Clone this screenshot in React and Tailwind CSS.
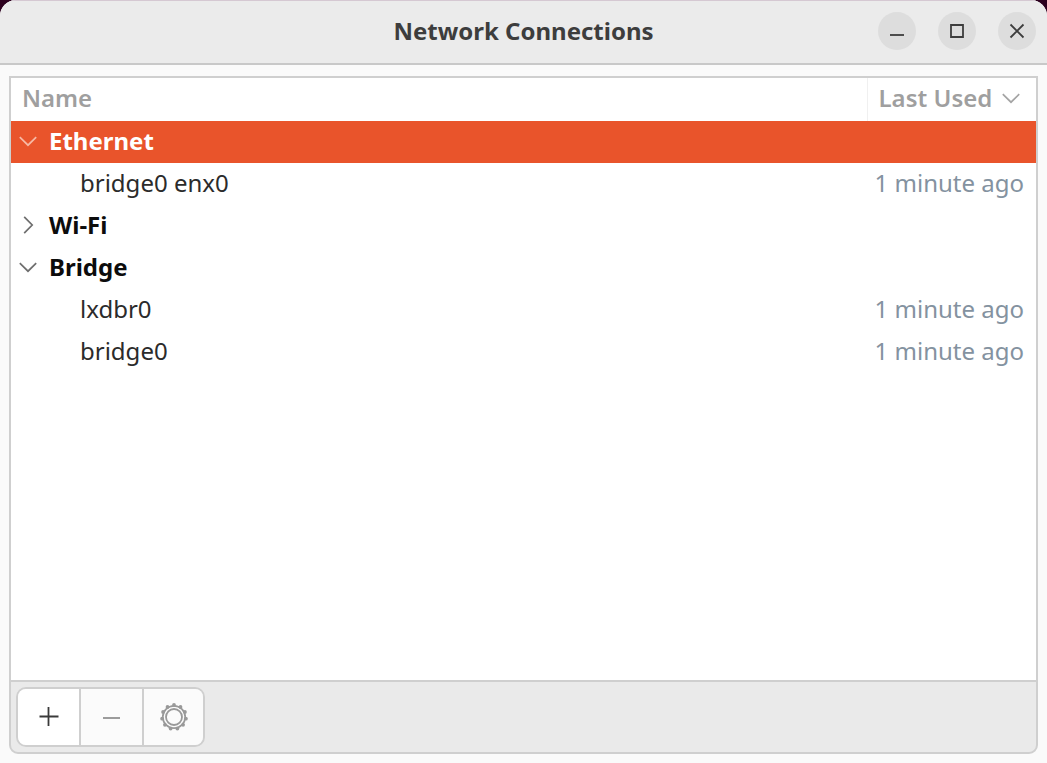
import { useState } from "react";

const GROUPS = [
  { name: "Ethernet", open: true, items: [{ name: "bridge0 enx0", used: "1 minute ago" }] },
  { name: "Wi-Fi", open: false, items: [] },
  {
    name: "Bridge",
    open: true,
    items: [
      { name: "lxdbr0", used: "1 minute ago" },
      { name: "bridge0", used: "1 minute ago" },
    ],
  },
];

function Chevron({ className }) {
  return (
    <svg viewBox="0 0 18 18" className={`size-[18px] shrink-0 ${className}`} fill="none" stroke="currentColor" strokeWidth="1.7" aria-hidden="true">
      <path d="M0.8 5.2 9 13.2 17.2 5.2" />
    </svg>
  );
}

function WindowButton({ label, children }) {
  return (
    <button type="button" aria-label={label} className="flex size-[38px] items-center justify-center rounded-full bg-[#dddddd] text-[#3d3d3d]">
      <svg viewBox="0 0 18 18" className="size-[18px]" fill="none" stroke="currentColor" strokeWidth="1.8" aria-hidden="true">
        {children}
      </svg>
    </button>
  );
}

function Gear() {
  const teeth = Array.from({ length: 11 }, (_, i) => {
    const a = (i * 2 * Math.PI) / 11 - Math.PI / 2;
    return [15 + 12 * Math.cos(a), 15 + 12 * Math.sin(a)];
  });
  return (
    <svg viewBox="0 0 30 30" className="size-[30px]" fill="none" stroke="currentColor" aria-hidden="true">
      {teeth.map(([x, y], i) => (
        <circle key={i} cx={x} cy={y} r="1.9" fill="currentColor" stroke="none" />
      ))}
      <circle cx="15" cy="15" r="11.2" strokeWidth="1.7" />
      <circle cx="15" cy="15" r="8" strokeWidth="1.8" />
    </svg>
  );
}

function Group({ group, selected, onToggle }) {
  return (
    <>
      <tr className={selected ? "h-[42px] bg-[#e9542b] text-white" : "h-[42px] text-[#0c0c0c]"}>
        <td colSpan={2} className="p-0">
          <button type="button" aria-expanded={group.open} onClick={onToggle} className="flex h-[42px] w-full items-center gap-3 pb-[2px] pl-2 text-left font-bold">
            <Chevron className={`${group.open ? "" : "-rotate-90"} ${selected ? "text-[#f6b9a5]" : "text-[#6e6e6e]"}`} />
            {group.name}
          </button>
        </td>
      </tr>
      {group.open &&
        group.items.map((item) => (
          <tr key={item.name} className="h-[42px]">
            <td className="p-0 pb-[2px] pl-[69px] text-[#2b2b2b]">{item.name}</td>
            <td className="p-0 pr-3 pb-[2px] text-right whitespace-nowrap text-[#8492a0]">{item.used}</td>
          </tr>
        ))}
    </>
  );
}

export default function App() {
  const [groups, setGroups] = useState(GROUPS);
  const toggle = (name) => setGroups(groups.map((g) => (g.name === name ? { ...g, open: !g.open } : g)));

  return (
    <div className="min-h-screen bg-[#2c001e] font-['Noto_Sans',sans-serif] text-[24px] leading-8">
      <div className="flex min-h-screen flex-col overflow-hidden rounded-t-[16px] bg-[#fafafa]">
        <header className="grid h-[65px] shrink-0 grid-cols-[1fr_auto_1fr] items-center border-t border-b-2 border-t-[#d5c8d2] border-b-[#c8c8c8] bg-[#ebebeb] pb-[2px]">
          <h1 className="col-start-2 font-bold text-[#3d3d3d]">Network Connections</h1>
          <div className="flex justify-end gap-[22px] pr-[11px]">
            <WindowButton label="Minimize">
              <path d="M2 13H16" />
            </WindowButton>
            <WindowButton label="Maximize">
              <path d="M3 3H15V15H3Z" />
            </WindowButton>
            <WindowButton label="Close">
              <path d="M2.5 2.5 15.5 15.5M15.5 2.5 2.5 15.5" />
            </WindowButton>
          </div>
        </header>

        <main className="flex flex-1 flex-col px-[9px] pt-[11px] pb-[9px]">
          <section className="flex flex-1 flex-col rounded-b-[9px] border-2 border-[#cfcfcf] bg-[#eaeaea]">
            <div className="flex-1 bg-white">
              <table className="w-full border-collapse">
                <thead>
                  <tr className="h-[43px] text-[#9f9f9f]">
                    <th scope="col" className="p-0 pb-1 pl-[11px] text-left font-semibold">Name</th>
                    <th scope="col" className="w-[169px] border-l border-[#f0f0f0] p-0 pb-1">
                      <button type="button" className="flex w-full items-center justify-between pr-4 pl-[11px] font-semibold whitespace-nowrap">
                        Last Used
                        <Chevron className="text-[#a4a4a4]" />
                      </button>
                    </th>
                  </tr>
                </thead>
                <tbody>
                  {groups.map((g) => (
                    <Group key={g.name} group={g} selected={g.name === "Ethernet"} onToggle={() => toggle(g.name)} />
                  ))}
                </tbody>
              </table>
            </div>
            <div className="flex border-t-2 border-[#cfcfcf] p-[5px]">
              <div className="flex h-[60px] divide-x-2 divide-[#cfcfcf] overflow-hidden rounded-[10px] border-2 border-[#cfcfcf]">
                <button type="button" aria-label="Add" className="flex w-[63px] items-center justify-center bg-white text-[#3a3a3a]">
                  <svg viewBox="0 0 20 20" className="size-5" stroke="currentColor" strokeWidth="1.8" aria-hidden="true">
                    <path d="M0.5 9.5H19.5M9.5 0V19" />
                  </svg>
                </button>
                <button type="button" aria-label="Remove" disabled className="flex w-[63px] items-center justify-center bg-[#fbfbfb] text-[#9c9c9c]">
                  <svg viewBox="0 0 20 20" className="size-5" stroke="currentColor" strokeWidth="1.8" aria-hidden="true">
                    <path d="M1 11H18" />
                  </svg>
                </button>
                <button type="button" aria-label="Settings" disabled className="flex w-[59px] items-center justify-center bg-[#fbfbfb] text-[#999999]">
                  <Gear />
                </button>
              </div>
            </div>
          </section>
        </main>
      </div>
    </div>
  );
}
